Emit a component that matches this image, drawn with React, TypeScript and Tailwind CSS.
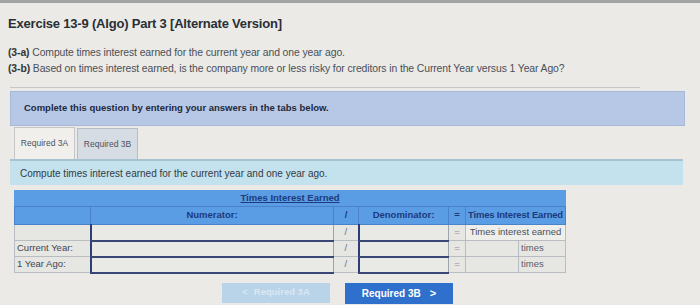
export default function App() {
  const cell = "border border-[#b9bcc0] bg-[#e6e6e3]";
  const input = "border-l-2 border-l-[#2c3d78] border-b-2 border-b-[#3a4775] border-t border-t-[#b9bcc0] border-r border-r-[#9ea4ae] bg-[#e9e9e6]";
  const head = "border border-[#4a83c9] bg-[#5a9de4] text-[#1c3a7c] font-bold";

  return (
    <div className="w-[700px] h-[305px] overflow-hidden bg-[#ebeae6] font-['Liberation_Sans',Arial,sans-serif] text-[#3a3f48] relative">
      <div className="h-[3px] bg-[#a2a3a5]" />

      <div className="pl-[8px] pt-[13px] text-[13px] font-bold tracking-[-0.2px] text-[#2a2e35] leading-[16px]">
        Exercise 13-9 (Algo) Part 3 [Alternate Version]
      </div>

      <div className="pl-[8px] pt-[13px] text-[10.4px] leading-[16px] text-[#4a4f58] tracking-[-0.1px]">
        <div>
          <span className="font-bold text-[#333]">(3-a)</span> Compute times interest earned for the current year and one year ago.
        </div>
        <div>
          <span className="font-bold text-[#333]">(3-b)</span> Based on times interest earned, is the company more or less risky for creditors in the Current Year versus 1 Year Ago?
        </div>
      </div>

      <div className="ml-[10px] w-[630px] mt-[10px] border-t border-[#c6c7c9]" />

      <div className="ml-[10px] w-[675px] mt-[3px] h-[35px] bg-[#b7c7e6] border border-[#a9b9d8] flex items-center pl-[13px] text-[9.5px] font-bold text-[#23293a]">
        Complete this question by entering your answers in the tabs below.
      </div>

      <div className="ml-[14px] mt-[1px] flex gap-[2px] items-end">
        <div className="w-[61px] h-[32px] bg-[#f0efeb] border border-[#c4c6c9] border-b-0 flex items-center justify-center text-[8.5px] text-[#4b5260]">
          Required 3A
        </div>
        <div className="w-[61px] h-[31px] bg-[#d6dce3] border border-[#b7bdc5] border-b-0 flex items-center justify-center text-[8.5px] text-[#4b5260]">
          Required 3B
        </div>
      </div>

      <div className="ml-[10px] w-[673px] h-[26px] bg-[#c3e2ed] border-t-2 border-[#a8c3cf] flex items-center pl-[10px] text-[10px] text-[#343a46]">
        Compute times interest earned for the current year and one year ago.
      </div>

      <table className="ml-[14px] mt-[5px] border-collapse table-fixed w-[551px] text-[9.5px]">
        <colgroup>
          <col className="w-[76px]" />
          <col className="w-[243px]" />
          <col className="w-[25px]" />
          <col className="w-[90px]" />
          <col className="w-[17px]" />
          <col className="w-[53px]" />
          <col className="w-[47px]" />
        </colgroup>
        <thead>
          <tr className="h-[16px]">
            <th colSpan={7} className="bg-[#5a9de4] border border-[#5a9de4] border-b-[#4a83c9] text-center font-bold text-[#1c3a7c] underline">
              Times Interest Earned
            </th>
          </tr>
          <tr className="h-[18px]">
            <th className={head}></th>
            <th className={head}>Numerator:</th>
            <th className={head}>/</th>
            <th className={head}>Denominator:</th>
            <th className={head}>=</th>
            <th colSpan={2} className={head + " whitespace-nowrap tracking-[-0.2px]"}>Times Interest Earned</th>
          </tr>
        </thead>
        <tbody>
          {[
            { label: "", result: "Times interest earned" },
            { label: "Current Year:", result: "times" },
            { label: "1 Year Ago:", result: "times" },
          ].map((r, i) => (
            <tr key={i} className="h-[16px]">
              <td className={cell + " pl-[2px] text-left text-[#3f4550]"}>{r.label}</td>
              <td className={input}></td>
              <td className={cell + " text-center text-[#6b7280]"}>/</td>
              <td className={input}></td>
              <td className={cell + " text-center text-[#8a9099]"}>=</td>
              {i === 0 ? (
                <td colSpan={2} className={cell + " text-center text-[#4a505a] bg-[#eeeeeb] whitespace-nowrap"}>{r.result}</td>
              ) : (
                <>
                  <td className={cell}></td>
                  <td className={cell + " pl-[2px] text-[#5a606a]"}>{r.result}</td>
                </>
              )}
            </tr>
          ))}
        </tbody>
      </table>

      <div className="ml-[222px] mt-[9px] flex gap-[15px]">
        <div className="w-[108px] h-[20px] bg-[#b9d3e8] flex items-center justify-center gap-[6px] text-[9.5px] font-bold text-[#dbe8f3]">
          <span>&lt;</span>
          <span>Required 3A</span>
        </div>
        <div className="w-[108px] h-[21px] bg-[#2f70cc] flex items-center justify-center gap-[9px] text-[10px] font-bold text-white">
          <span>Required 3B</span>
          <span className="text-[11px]">&gt;</span>
        </div>
      </div>
    </div>
  );
}
